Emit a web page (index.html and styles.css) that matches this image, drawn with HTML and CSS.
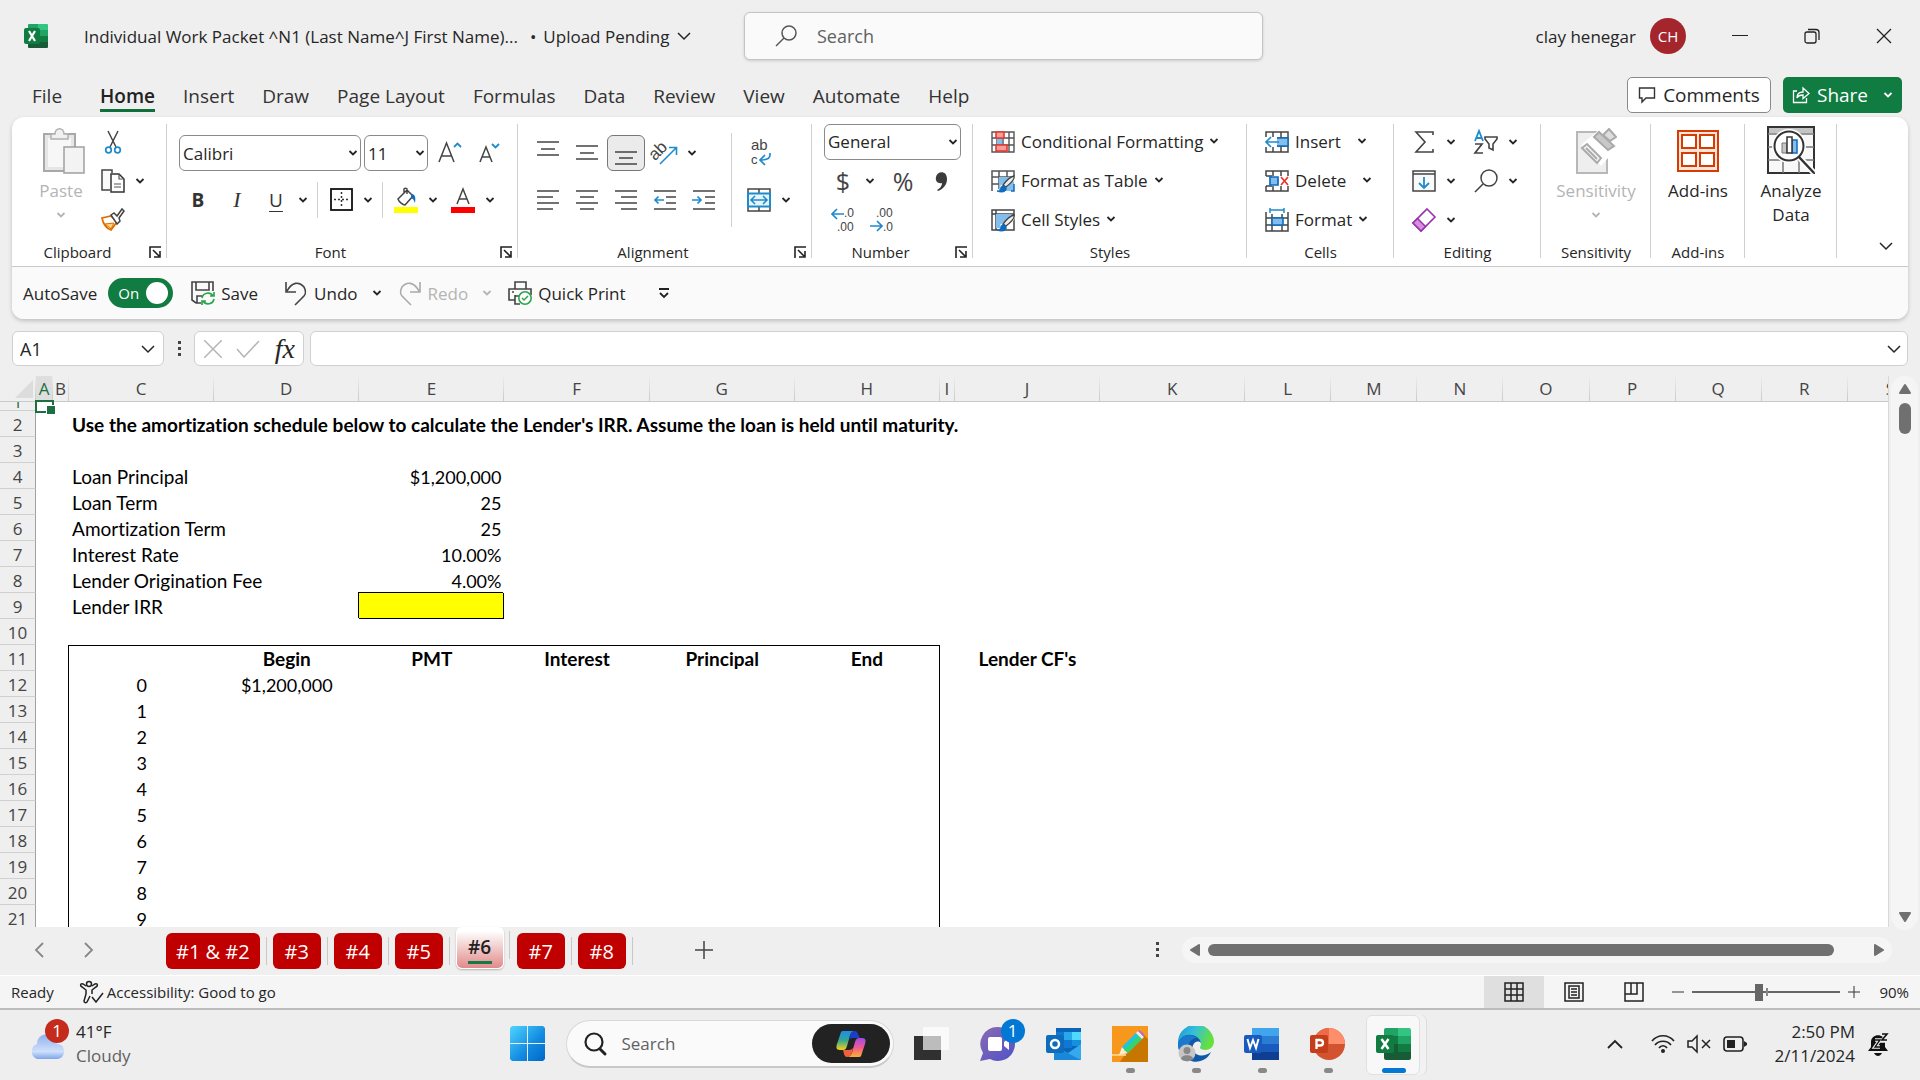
FILE: index.html
```html
<!DOCTYPE html>
<html lang="en">
<head>
  <meta charset="UTF-8">
  <title>Individual Work Packet - Excel</title>
  <link rel="stylesheet" href="styles.css">
</head>
<body>
  <svg class="defs" aria-hidden="true">
    <symbol id="chev" viewBox="0 0 10 10"><path d="M1.500 3l3.500 3.500L8.500 3" fill="none" stroke="currentColor" stroke-width="1.800"/></symbol>
    <symbol id="chev-lg" viewBox="0 0 16 16"><path d="M2 5l6 6 6-6" fill="none" stroke="currentColor" stroke-width="1.500"/></symbol>
    <symbol id="launch" viewBox="0 0 12 12"><path d="M1 12V1h11M4 4l6 6M11 5v6H5" fill="none" stroke="#222" stroke-width="1.600"/></symbol>
    <symbol id="excel" viewBox="0 0 36 36">
      <path d="M8 4a2 2 0 0 1 2-2h12v8H8z" fill="#21a366"/><path d="M22 2h11a2 2 0 0 1 2 2v6H22z" fill="#33c481"/>
      <path d="M8 10h14v8H8z" fill="#107c41"/><path d="M22 10h13v8H22z" fill="#21a366"/>
      <path d="M22 18h13v8H22z" fill="#107c41"/><path d="M8 18h14v8h13v6a2 2 0 0 1-2 2H10a2 2 0 0 1-2-2z" fill="#185c37"/>
      <rect x="0" y="9" width="18" height="18" rx="2" fill="#107c41"/>
      <path d="M5.500 13l7 10M12.500 13l-7 10" stroke="#fff" stroke-width="2.500"/>
    </symbol>
    <symbol id="excel-sm" viewBox="0 0 24 24">
      <path d="M4 1a1 1 0 0 1 1-1h9v6H4z" fill="#21a366"/><path d="M14 0h9a1 1 0 0 1 1 1v5H14z" fill="#33c481"/>
      <path d="M4 6h10v6H4z" fill="#107c41"/><path d="M14 6h10v6H14z" fill="#21a366"/>
      <path d="M14 12h10v6H14z" fill="#107c41"/><path d="M4 12h10v6h10v5a1 1 0 0 1-1 1H5a1 1 0 0 1-1-1z" fill="#185c37"/>
      <rect x="0" y="4" width="16" height="16" rx="2" fill="#107c41"/>
      <path d="M5 7l6 10M11 7L5 17" stroke="#fff" stroke-width="2.200"/>
    </symbol>
    <symbol id="brush" viewBox="0 0 24 24"><path d="M9 17L22 7l2 2-1 3-11 9z" fill="#fff"/><path d="M12 16c3-4 7-8 11-9 1 3-4 8-8 11z" fill="#eee" stroke="#444" stroke-width="1.300"/><path d="M6 22c4 0 3-2 5-5 3-1 5 2 4 4-2 3-7 2-9 1z" fill="#0f6cbd" stroke="#0f6cbd"/></symbol>
  </svg>

  <header class="titlebar">
    <div class="title-left">
      <svg class="i24"><use href="#excel-sm"/></svg>
      <span class="doc-name">Individual Work Packet ^N1 (Last Name^J First Name)...</span>
      <button class="upload"><span>•</span> Upload Pending <svg class="i16"><use href="#chev-lg"/></svg></button>
    </div>
    <label class="search">
      <svg class="i24" viewBox="0 0 24 24"><circle cx="14" cy="9" r="7" fill="none" stroke="#555" stroke-width="1.500"/><path d="M9 14l-8 8" stroke="#555" stroke-width="1.500"/></svg>
      <input type="text" placeholder="Search" aria-label="Search">
    </label>
    <div class="title-right">
      <span>clay henegar</span>
      <span class="avatar">CH</span>
      <button class="win" aria-label="Minimize"><svg class="i16" viewBox="0 0 16 16"><path d="M0 7.500h16" stroke="#222"/></svg></button>
      <button class="win" aria-label="Restore"><svg class="i16" viewBox="0 0 16 16"><rect x="1" y="4" width="11" height="11" rx="2" fill="none" stroke="#222" stroke-width="1.300"/><path d="M4 1.500h8a3 3 0 0 1 3 3V12" fill="none" stroke="#222" stroke-width="1.300"/></svg></button>
      <button class="win" aria-label="Close"><svg class="i16" viewBox="0 0 16 16"><path d="M1 1l14 14M15 1L1 15" stroke="#222" stroke-width="1.300"/></svg></button>
    </div>
  </header>

  <nav class="tabs">
    <a href="#" class="file">File</a>
    <a href="#" class="active">Home</a>
    <a href="#">Insert</a>
    <a href="#">Draw</a>
    <a href="#">Page Layout</a>
    <a href="#">Formulas</a>
    <a href="#">Data</a>
    <a href="#">Review</a>
    <a href="#">View</a>
    <a href="#">Automate</a>
    <a href="#">Help</a>
    <div class="tab-actions">
      <button class="comments"><svg class="i18" viewBox="0 0 18 18"><path d="M1.500 2h15v10H8l-4 4v-4H1.500z" fill="none" stroke="#333" stroke-width="1.400"/></svg>Comments</button>
      <button class="share"><svg class="i18" viewBox="0 0 18 18"><path d="M5 5H1.500v11.500h13V12M5 12c0-5 3-6 6-6V2l6 5.500-6 5V9c-3 0-5 1-6 3z" fill="none" stroke="#fff" stroke-width="1.300"/></svg>Share<svg class="i10"><use href="#chev"/></svg></button>
    </div>
  </nav>

  <section class="ribbon">
    <div class="groups">
      <div class="group clipboard">
        <div class="body">
          <button class="big dim">
            <svg width="42" height="46" viewBox="0 0 42 46"><path d="M1 6h31v37H1z" fill="#e6e6e6" stroke="#a8a8a8" stroke-width="2"/><path d="M5 10h23v29H5z" fill="#f7f7f7"/><path d="M8 11V6h4c0-7 9-7 9 0h4v5z" fill="#f0f0f0" stroke="#b0b0b0" stroke-width="1.500"/><path d="M21 19h20v26H21z" fill="#f3f3f3" stroke="#a0a0a0" stroke-width="1.500"/></svg>
            Paste
            <svg class="i10"><use href="#chev"/></svg>
          </button>
          <div class="stack">
            <div class="row"><button class="ib" aria-label="Cut"><svg class="i24" viewBox="0 0 24 24"><path d="M7 1l8 16M17 1L9 17" stroke="#444" stroke-width="1.500"/><circle cx="7.500" cy="20" r="2.800" fill="none" stroke="#1e8bcd" stroke-width="1.700"/><circle cx="16.500" cy="20" r="2.800" fill="none" stroke="#1e8bcd" stroke-width="1.700"/></svg></button></div>
            <div class="row"><button class="ib" aria-label="Copy"><svg class="i24" viewBox="0 0 24 24"><path d="M9 21H1V1h10v3" fill="#fafafa" stroke="#444" stroke-width="1.500"/><path d="M10 5h8l5 5v13H10z" fill="#fff" stroke="#333" stroke-width="1.500"/><path d="M18 5v5h5M13 15h7M13 18h7" fill="none" stroke="#555" stroke-width="1.200"/></svg></button><button class="dd" aria-label="Copy options"><svg class="i10"><use href="#chev"/></svg></button></div>
            <div class="row"><button class="ib" aria-label="Format Painter"><svg class="i24" viewBox="0 0 24 24"><path d="M1 10l9-2 6 6-6 8C6 21 2 16 1 10z" fill="#fff" stroke="#e06c00" stroke-width="1.700"/><path d="M4 16l9-1-3 6z" fill="#ffd27a" stroke="#e06c00"/><path d="M10 7l3-2 3 3 5-7 2 2-5 7 1 3-3 3z" fill="#fff" stroke="#444" stroke-width="1.500"/></svg></button></div>
          </div>
        </div>
        <div class="foot"><span>Clipboard</span><svg class="i12"><use href="#launch"/></svg></div>
      </div>

      <div class="group font">
        <div class="body two">
          <div class="row">
            <div class="pick pick-font"><select aria-label="Font"><option>Calibri</option></select><svg class="i10"><use href="#chev"/></svg></div>
            <div class="pick pick-size"><select aria-label="Font size"><option>11</option></select><svg class="i10"><use href="#chev"/></svg></div>
            <button class="ib" aria-label="Grow font"><svg class="i24" viewBox="0 0 24 24"><path d="M1 21L8.500 2 16 21M4 15h9" fill="none" stroke="#444" stroke-width="1.500"/><path d="M16 6l3.500-3.500L23 6" fill="none" stroke="#1e8bcd" stroke-width="1.800"/></svg></button>
            <button class="ib" aria-label="Shrink font"><svg class="i24" viewBox="0 0 24 24"><path d="M3 21L9 6l6 15M5 16h8" fill="none" stroke="#444" stroke-width="1.500"/><path d="M15 3l3.500 3.500L22 3" fill="none" stroke="#1e8bcd" stroke-width="1.800"/></svg></button>
          </div>
          <div class="row">
            <button class="ib glyph bold">B</button>
            <button class="ib glyph italic">I</button>
            <button class="ib glyph under">U</button>
            <button class="dd" aria-label="Underline options"><svg class="i10"><use href="#chev"/></svg></button>
            <span class="sep"></span>
            <button class="ib" aria-label="Borders"><svg class="i24" viewBox="0 0 24 24"><rect x="2" y="1" width="21" height="21" fill="#fff" stroke="#111" stroke-width="1.800"/><path d="M12.500 4v16M5 11.500h16" stroke="#333" stroke-width="1.500" stroke-dasharray="2 2"/></svg></button>
            <button class="dd" aria-label="Border options"><svg class="i10"><use href="#chev"/></svg></button>
            <span class="sep"></span>
            <button class="ib" aria-label="Fill colour"><svg class="i24" viewBox="0 0 24 24"><path d="M4 11l9-9 6 6-8 9c-2 0-6-3-7-6zM10 5V1c0-1 3-1 3 0v5" fill="none" stroke="#444" stroke-width="1.500"/><path d="M17 6c4 0 5 3 4 9-1-2-1-4-4-5z" fill="#0f6cbd"/><path d="M0 19h24v6H0z" fill="#ff0"/></svg></button>
            <button class="dd" aria-label="Fill options"><svg class="i10"><use href="#chev"/></svg></button>
            <button class="ib" aria-label="Font colour"><svg class="i24" viewBox="0 0 24 24"><path d="M6 16l6-15 6 15M8 11h8" fill="none" stroke="#444" stroke-width="1.500"/><path d="M0 19h24v6H0z" fill="red"/></svg></button>
            <button class="dd" aria-label="Font colour options"><svg class="i10"><use href="#chev"/></svg></button>
          </div>
        </div>
        <div class="foot"><span>Font</span><svg class="i12"><use href="#launch"/></svg></div>
      </div>

      <div class="group align">
        <div class="body cols">
          <div class="two">
            <div class="row">
              <button class="ib" aria-label="Top align"><svg class="i24 ln" viewBox="0 0 24 24"><path d="M1 1h22M5 8h14M1 14h22"/></svg></button>
              <button class="ib" aria-label="Middle align"><svg class="i24 ln" viewBox="0 0 24 24"><path d="M1 5h22M5 12h14M1 18h22"/></svg></button>
              <button class="ib on" aria-label="Bottom align"><svg class="i24 ln" viewBox="0 0 24 24"><path d="M1 11h22M5 17h14M1 23h22"/></svg></button>
              <button class="ib" aria-label="Orientation"><svg class="i24" viewBox="0 0 24 24"><text class="tiny" x="-2" y="17" transform="rotate(-45 4 14)" font-size="17">ab</text><path d="M7 23L23 7M16 6.500h7.500V14" fill="none" stroke="#1e8bcd" stroke-width="1.600"/></svg></button>
              <button class="dd" aria-label="Orientation options"><svg class="i10"><use href="#chev"/></svg></button>
            </div>
            <div class="row">
              <button class="ib" aria-label="Align left"><svg class="i24 ln" viewBox="0 0 24 24"><path d="M1 3h22M1 9h16M1 15h22M1 21h16"/></svg></button>
              <button class="ib" aria-label="Centre"><svg class="i24 ln" viewBox="0 0 24 24"><path d="M1 3h22M5 9h14M1 15h22M5 21h14"/></svg></button>
              <button class="ib" aria-label="Align right"><svg class="i24 ln" viewBox="0 0 24 24"><path d="M1 3h22M7 9h16M1 15h22M7 21h16"/></svg></button>
              <button class="ib" aria-label="Decrease indent"><svg class="i24 ln" viewBox="0 0 24 24"><path d="M1 3h22M13 9h10M13 15h10M1 21h22"/><path class="blue" d="M11 12H2M5.500 8.500L2 12l3.500 3.500"/></svg></button>
              <button class="ib" aria-label="Increase indent"><svg class="i24 ln" viewBox="0 0 24 24"><path d="M1 3h22M13 9h10M13 15h10M1 21h22"/><path class="blue" d="M0 12h9M5.500 8.500L9 12l-3.500 3.500"/></svg></button>
            </div>
          </div>
          <span class="sep tall"></span>
          <div class="two">
            <div class="row"><button class="ib" aria-label="Wrap text"><svg class="i24" viewBox="0 0 24 24"><text class="tiny" x="4" y="9" font-size="15">ab</text><text class="tiny" x="4" y="23" font-size="13">c</text><path d="M23 12v2c0 4-3 5-9 5M18 14l-5 5 5 5" fill="none" stroke="#1e8bcd" stroke-width="1.700"/></svg></button></div>
            <div class="row"><button class="ib" aria-label="Merge and centre"><svg class="i24" viewBox="0 0 24 24"><path d="M1 1h22v22H1zM12 1v22" fill="#fff" stroke="#444" stroke-width="1.500"/><path d="M1 5.500h22v13H1z" fill="#e8f4fc" stroke="#1e8bcd" stroke-width="2"/><path d="M4 12h16M8 8l-4 4 4 4M16 8l4 4-4 4" fill="none" stroke="#1e8bcd" stroke-width="1.600"/></svg></button><button class="dd" aria-label="Merge options"><svg class="i10"><use href="#chev"/></svg></button></div>
          </div>
        </div>
        <div class="foot"><span>Alignment</span><svg class="i12"><use href="#launch"/></svg></div>
      </div>

      <div class="group number">
        <div class="body stack">
          <div class="row"><div class="pick pick-num"><select aria-label="Number format"><option>General</option></select><svg class="i10"><use href="#chev"/></svg></div></div>
          <div class="row">
            <button class="ib money">$</button>
            <button class="dd" aria-label="Currency options"><svg class="i10"><use href="#chev"/></svg></button>
            <button class="ib money pct">%</button>
            <button class="ib" aria-label="Comma style"><svg class="i24" viewBox="0 0 24 24"><path d="M7 21c4-2 5-5 5-7-4 1-7-2-6-6 1-6 11-7 11 2 0 6-4 10-9 12z" fill="#3b3b3b"/></svg></button>
          </div>
          <div class="row">
            <button class="ib" aria-label="Increase decimal"><svg class="i24" viewBox="0 0 24 24"><text class="tiny" x="13" y="9" font-size="12">.0</text><text class="tiny" x="6" y="23" font-size="12">.00</text><path d="M13 6H1M6 1L1 6l5 5" fill="none" stroke="#1e8bcd" stroke-width="1.700"/></svg></button>
            <button class="ib" aria-label="Decrease decimal"><svg class="i24" viewBox="0 0 24 24"><text class="tiny" x="6" y="9" font-size="12">.00</text><text class="tiny" x="13" y="23" font-size="12">.0</text><path d="M0 18h12M7 13l5 5-5 5" fill="none" stroke="#1e8bcd" stroke-width="1.700"/></svg></button>
          </div>
        </div>
        <div class="foot"><span>Number</span><svg class="i12"><use href="#launch"/></svg></div>
      </div>

      <div class="group styles">
        <div class="body stack">
          <button class="cmd"><svg class="i24" viewBox="0 0 24 24"><path d="M1 2h22v20H1zM1 8h22M1 15h22M6 2v20M12 2v20M18 2v20" fill="#fff" stroke="#555" stroke-width="1.400"/><path d="M6 9h5v5H6z" fill="#83beec"/><path d="M5 2h8v6H5zM5 15h11v6H5z" fill="#ff9a9a" stroke="#e03c31" stroke-width="1.600"/></svg>Conditional Formatting<svg class="i10"><use href="#chev"/></svg></button>
          <button class="cmd"><svg class="i24" viewBox="0 0 24 24"><path d="M1 22V2h22v5M1 8h22M1 15h8M8 2v18M16 2v6" fill="none" stroke="#555" stroke-width="1.500"/><path d="M8 8h15v14H8z" fill="#83beec"/><path d="M20 22h3v-7" fill="none" stroke="#0f6cbd" stroke-width="1.500"/><use href="#brush" width="24" height="24"/></svg>Format as Table<svg class="i10"><use href="#chev"/></svg></button>
          <button class="cmd"><svg class="i24" viewBox="0 0 24 24"><path d="M1 2h22v20H1zM1 6h22M5 2v20" fill="#fff" stroke="#444" stroke-width="1.500"/><path d="M5 6h16l-12 14H5z" fill="#83beec"/><use href="#brush" width="24" height="24"/></svg>Cell Styles<svg class="i10"><use href="#chev"/></svg></button>
        </div>
        <div class="foot"><span>Styles</span></div>
      </div>

      <div class="group cells">
        <div class="body stack">
          <button class="cmd wide"><svg class="i24" viewBox="0 0 24 24"><path d="M1 2h22v20H1zM1 8h22M1 16h22M8 2v20M16 2v20" fill="#fff" stroke="#444" stroke-width="1.500"/><path d="M11 8h12v8H11z" fill="#83beec" stroke="#0f6cbd" stroke-width="1.500"/><path d="M0 7h12v10H0z" fill="#fff"/><path d="M14 12H1M6 7l-5 5 5 5" fill="none" stroke="#1e8bcd" stroke-width="1.700"/></svg>Insert<svg class="i10"><use href="#chev"/></svg></button>
          <button class="cmd wide"><svg class="i24" viewBox="0 0 24 24"><path d="M1 7V2h22v5M1 17v5h22v-5M1 7h6M1 17h6M8 2v5M16 2v5M8 17v5M16 17v5" fill="none" stroke="#444" stroke-width="1.500"/><path d="M5 8h8v8H5z" fill="#83beec" stroke="#0f6cbd" stroke-width="1.700"/><path d="M16 8l7 8M23 8l-7 8" stroke="#e8322a" stroke-width="1.700"/></svg>Delete<svg class="i10"><use href="#chev"/></svg></button>
          <button class="cmd"><svg class="i24" viewBox="0 0 24 24"><path d="M1 4v19h22V4M1 10h22M1 17h22M7 6v17M17 6v17" fill="none" stroke="#444" stroke-width="1.500"/><path d="M7 10h11v7H7z" fill="#83beec" stroke="#0f6cbd" stroke-width="1.600"/><path d="M5 2h14M5 0v5M19 0v5" stroke="#1e8bcd" stroke-width="1.500"/></svg>Format<svg class="i10"><use href="#chev"/></svg></button>
        </div>
        <div class="foot"><span>Cells</span></div>
      </div>

      <div class="group editing">
        <div class="body cols">
          <div class="stack">
            <div class="row"><button class="ib" aria-label="AutoSum"><svg class="i24" viewBox="0 0 24 24"><path d="M21 5V2H4l9 10-9 10h17v-3" fill="none" stroke="#444" stroke-width="1.600"/></svg></button><button class="dd" aria-label="AutoSum options"><svg class="i10"><use href="#chev"/></svg></button></div>
            <div class="row"><button class="ib" aria-label="Fill"><svg class="i24" viewBox="0 0 24 24"><path d="M1 2h22v20H1zM1 5h22" fill="#fafafa" stroke="#444" stroke-width="1.500"/><path d="M12 8v11M7 14l5 5 5-5" fill="none" stroke="#1e8bcd" stroke-width="1.800"/></svg></button><button class="dd" aria-label="Fill options"><svg class="i10"><use href="#chev"/></svg></button></div>
            <div class="row"><button class="ib" aria-label="Clear"><svg class="i24" viewBox="0 0 24 24"><path d="M15 1l8 8-14 14-8-8z" fill="#fff" stroke="#9b2fae" stroke-width="1.600"/><path d="M5.500 10.500l8 8L9 23l-8-8z" fill="#d68fdf" stroke="#9b2fae" stroke-width="1.500"/></svg></button><button class="dd" aria-label="Clear options"><svg class="i10"><use href="#chev"/></svg></button></div>
          </div>
          <div class="stack">
            <div class="row"><button class="ib" aria-label="Sort and filter"><svg class="i24" viewBox="0 0 24 24"><path d="M1 11L5 1l4 10M2.500 8h5" fill="none" stroke="#1e8bcd" stroke-width="1.800"/><path d="M1 14h7l-7 9h8" fill="none" stroke="#444" stroke-width="1.700"/><path d="M11 7h12v2l-4 5v6l-4-2v-4l-4-5z" fill="none" stroke="#444" stroke-width="1.600"/></svg></button><button class="dd" aria-label="Sort options"><svg class="i10"><use href="#chev"/></svg></button></div>
            <div class="row"><button class="ib" aria-label="Find"><svg class="i24" viewBox="0 0 24 24"><circle cx="15" cy="9" r="8" fill="none" stroke="#444" stroke-width="1.500"/><path d="M9 15l-8 8" stroke="#444" stroke-width="1.600"/></svg></button><button class="dd" aria-label="Find options"><svg class="i10"><use href="#chev"/></svg></button></div>
          </div>
        </div>
        <div class="foot"><span>Editing</span></div>
      </div>

      <div class="group sens">
        <div class="body">
          <button class="big dim">
            <svg width="42" height="46" viewBox="0 0 42 46"><path d="M2 4h30v41H2z" fill="#eee" stroke="#b8b8b8" stroke-width="2"/><path d="M6 17L26 0l16 10-9 20-7 8z" fill="#fff"/><path d="M7 20l5-4 14 14-4 5z" fill="#f4f4f4" stroke="#aaa" stroke-width="2"/><path d="M11 20l11 11" stroke="#aaa" stroke-width="2"/><path d="M19 9l5-5 15 14-6 4z" fill="#c8c8c8" stroke="#aaa" stroke-width="2"/><path d="M28 7l6-6 7 8-6 4z" fill="#ddd" stroke="#aaa" stroke-width="2"/></svg>
            Sensitivity
            <svg class="i10"><use href="#chev"/></svg>
          </button>
        </div>
        <div class="foot"><span>Sensitivity</span></div>
      </div>

      <div class="group addins">
        <div class="body">
          <button class="big">
            <svg width="42" height="46" viewBox="0 0 42 46"><path d="M1 3h40v40H1z" fill="#fde5dc" stroke="#d83b01" stroke-width="2"/><path d="M5 7h14v13H5zM23 7h14v13H23zM5 25h14v13H5zM23 25h14v13H23z" fill="#fff" stroke="#d83b01" stroke-width="2"/></svg>
            Add-ins
          </button>
        </div>
        <div class="foot"><span>Add-ins</span></div>
      </div>

      <div class="group analyze">
        <div class="body">
          <button class="big">
            <svg width="48" height="46" viewBox="0 2 48 46" overflow="visible"><path d="M1 1h46v46H1z" fill="#f8f8f8" stroke="#333" stroke-width="2"/><path d="M2 2h44v5H2z" fill="#c4c4c4"/><path d="M1 8h46M1 21h46M1 34h46M16 34v13M32 34v13" stroke="#777" stroke-width="1.500"/><path d="M32 31l15 16" stroke="#fff" stroke-width="6"/><circle cx="22" cy="20" r="17" fill="#fff"/><circle cx="22" cy="20" r="14.500" fill="#fff" stroke="#333" stroke-width="2"/><path d="M32 31l15 16" stroke="#333" stroke-width="2.500"/><path d="M15 17h5v10h-5z" fill="#c8c6c4" stroke="#777"/><path d="M25 14h5v13h-5z" fill="#83beec" stroke="#0f6cbd" stroke-width="1.500"/><path d="M20 11h5v16h-5z" fill="#fff" stroke="#333" stroke-width="1.500"/></svg>
            Analyze<br>Data
          </button>
        </div>
        <div class="foot"></div>
      </div>

      <button class="collapse" aria-label="Collapse ribbon"><svg class="i16"><use href="#chev-lg"/></svg></button>
    </div>

    <div class="quick">
      <label class="autosave">AutoSave <input type="checkbox" checked><span class="switch">On</span></label>
      <button class="q"><svg class="i24" viewBox="0 0 24 24"><path d="M10 22H5l-4-3V1h21v9M5 1v8h13V1M6 22v-7h5" fill="none" stroke="#444" stroke-width="1.600"/><path d="M11 17a6 6 0 0 1 11-2M23 11v4h-4M23 18a6 6 0 0 1-11 2M11 24v-4h4" fill="none" stroke="#2ea44f" stroke-width="1.700"/></svg>Save</button>
      <button class="q"><svg class="i24" viewBox="0 0 24 24"><path d="M2 1v10h10M3 10c5-9 12-10 17-4 3 5 1 9-2 11l-7 7" fill="none" stroke="#444" stroke-width="1.600"/></svg>Undo</button>
      <button class="dd" aria-label="Undo history"><svg class="i10"><use href="#chev"/></svg></button>
      <button class="q dim"><svg class="i24" viewBox="0 0 24 24"><path d="M22 1v10H12M21 10C16 1 9 0 4 6c-3 5-1 9 2 11l7 7" fill="none" stroke="#aaa" stroke-width="1.600"/></svg>Redo</button>
      <button class="dd dim" aria-label="Redo history"><svg class="i10"><use href="#chev"/></svg></button>
      <button class="q"><svg class="i24" viewBox="0 0 24 24"><path d="M7 8V1h11v7M7 19H1V8h22v6M4 11h2M7 14v9h5M7 15h6" fill="none" stroke="#444" stroke-width="1.600"/><circle cx="17" cy="17" r="6.200" fill="#fff" stroke="#2ea44f" stroke-width="1.600"/><path d="M14 17l2 2 4-4" fill="none" stroke="#2ea44f" stroke-width="1.500"/></svg>Quick Print</button>
      <button class="more" aria-label="Customize"><svg class="i12" viewBox="0 0 12 12"><path d="M1 2h10M2 6l4 4 4-4" fill="none" stroke="#222" stroke-width="1.800"/></svg></button>
    </div>
  </section>

  <section class="formula">
    <div class="namebox"><input type="text" value="A1" aria-label="Name box"><svg class="i16"><use href="#chev-lg"/></svg></div>
    <svg class="grip" width="30" height="16" viewBox="0 0 30 16"><path d="M14 0h3v3h-3zM14 6h3v3h-3zM14 12h3v3h-3z" fill="#444"/></svg>
    <div class="fx">
      <button aria-label="Cancel"><svg class="i18" viewBox="0 0 18 18"><path d="M0 0l18 18M18 0L0 18" stroke="#b5b5b5" stroke-width="1.500"/></svg></button>
      <button aria-label="Enter"><svg width="24" height="18" viewBox="0 0 24 18"><path d="M1 9l7 8L23 1" fill="none" stroke="#b5b5b5" stroke-width="1.500"/></svg></button>
      <button class="fn">fx</button>
    </div>
    <div class="bar"><input type="text" aria-label="Formula bar"><svg class="i16"><use href="#chev-lg"/></svg></div>
  </section>

  <main class="sheet">
    <div class="grid">
      <table>
        <colgroup>
          <col class="c-head"><col class="c-a"><col class="c-b">
          <col class="c-m"><col class="c-m"><col class="c-m"><col class="c-m"><col class="c-m"><col class="c-m">
          <col class="c-i"><col class="c-m"><col class="c-m">
          <col class="c-s"><col class="c-s"><col class="c-s"><col class="c-s"><col class="c-s"><col class="c-s"><col class="c-s"><col class="c-s">
        </colgroup>
        <thead>
          <tr><th class="corner"><svg width="18" height="18" viewBox="0 0 18 18"><path d="M18 0v18H0z" fill="#dcdcdc"/></svg></th><th class="sel">A</th><th>B</th><th>C</th><th>D</th><th>E</th><th>F</th><th>G</th><th>H</th><th>I</th><th>J</th><th>K</th><th>L</th><th>M</th><th>N</th><th>O</th><th>P</th><th>Q</th><th>R</th><th>S</th></tr>
        </thead>
        <tbody>
          <tr class="first"><th><span>1</span></th><td class="cursor"></td><td colspan="18"></td></tr>
          <tr><th>2</th><td></td><td></td><td class="b" colspan="17">Use the amortization schedule below to calculate the Lender's IRR. Assume the loan is held until maturity.</td></tr>
          <tr><th>3</th><td colspan="19"></td></tr>
          <tr><th>4</th><td></td><td></td><td colspan="2">Loan Principal</td><td class="num r">$1,200,000</td><td colspan="14"></td></tr>
          <tr><th>5</th><td></td><td></td><td colspan="2">Loan Term</td><td class="num r">25</td><td colspan="14"></td></tr>
          <tr><th>6</th><td></td><td></td><td colspan="2">Amortization Term</td><td class="num r">25</td><td colspan="14"></td></tr>
          <tr><th>7</th><td></td><td></td><td colspan="2">Interest Rate</td><td class="num r">10.00%</td><td colspan="14"></td></tr>
          <tr><th>8</th><td></td><td></td><td colspan="2">Lender Origination Fee</td><td class="num r">4.00%</td><td colspan="14"></td></tr>
          <tr><th>9</th><td></td><td></td><td colspan="2">Lender IRR</td><td class="answer"></td><td colspan="14"></td></tr>
          <tr><th>10</th><td colspan="19"></td></tr>
          <tr class="top"><th>11</th><td></td><td class="lf"></td><td class="b"></td><td class="b c">Begin</td><td class="b c">PMT</td><td class="b c">Interest</td><td class="b c">Principal</td><td class="b c rt">End</td><td></td><td class="b c plain">Lender CF's</td><td colspan="9"></td></tr>
          <tr><th>12</th><td></td><td class="lf"></td><td class="num c">0</td><td class="num c">$1,200,000</td><td colspan="4" class="rt"></td><td colspan="11"></td></tr>
          <tr><th>13</th><td></td><td class="lf"></td><td class="num c">1</td><td colspan="5" class="rt"></td><td colspan="11"></td></tr>
          <tr><th>14</th><td></td><td class="lf"></td><td class="num c">2</td><td colspan="5" class="rt"></td><td colspan="11"></td></tr>
          <tr><th>15</th><td></td><td class="lf"></td><td class="num c">3</td><td colspan="5" class="rt"></td><td colspan="11"></td></tr>
          <tr><th>16</th><td></td><td class="lf"></td><td class="num c">4</td><td colspan="5" class="rt"></td><td colspan="11"></td></tr>
          <tr><th>17</th><td></td><td class="lf"></td><td class="num c">5</td><td colspan="5" class="rt"></td><td colspan="11"></td></tr>
          <tr><th>18</th><td></td><td class="lf"></td><td class="num c">6</td><td colspan="5" class="rt"></td><td colspan="11"></td></tr>
          <tr><th>19</th><td></td><td class="lf"></td><td class="num c">7</td><td colspan="5" class="rt"></td><td colspan="11"></td></tr>
          <tr><th>20</th><td></td><td class="lf"></td><td class="num c">8</td><td colspan="5" class="rt"></td><td colspan="11"></td></tr>
          <tr><th>21</th><td></td><td class="lf"></td><td class="num c">9</td><td colspan="5" class="rt"></td><td colspan="11"></td></tr>
        </tbody>
      </table>
    </div>
    <div class="vscroll">
      <svg class="i12" viewBox="0 0 12 12"><path d="M6 2l5 8H1z" fill="#707070" stroke="#707070" stroke-width="2" stroke-linejoin="round"/></svg>
      <span class="vthumb"></span>
      <svg class="i12 end" viewBox="0 0 12 12"><path d="M6 10l5-8H1z" fill="#707070" stroke="#707070" stroke-width="2" stroke-linejoin="round"/></svg>
    </div>
  </main>

  <section class="sheetbar">
    <div class="sheet-nav">
      <button aria-label="Previous sheet"><svg class="i16" viewBox="0 0 16 16"><path d="M11 1L4 8l7 7" fill="none" stroke="#888" stroke-width="1.800"/></svg></button>
      <button aria-label="Next sheet"><svg class="i16" viewBox="0 0 16 16"><path d="M5 1l7 7-7 7" fill="none" stroke="#888" stroke-width="1.800"/></svg></button>
    </div>
    <div class="sheets">
      <button>#1 &amp; #2</button>
      <button>#3</button>
      <button>#4</button>
      <button>#5</button>
      <button class="current">#6</button>
      <button>#7</button>
      <button>#8</button>
    </div>
    <button class="add" aria-label="New sheet"><svg class="i18" viewBox="0 0 18 18"><path d="M9 0v18M0 9h18" stroke="#444" stroke-width="1.500"/></svg></button>
    <svg class="grip" width="30" height="16" viewBox="0 0 30 16"><path d="M14 0h3v3h-3zM14 6h3v3h-3zM14 12h3v3h-3z" fill="#444"/></svg>
    <div class="hscroll">
      <svg class="i12" viewBox="0 0 12 12"><path d="M2 6l8-5v10z" fill="#707070" stroke="#707070" stroke-width="2" stroke-linejoin="round"/></svg>
      <span class="hthumb"></span>
      <svg class="i12" viewBox="0 0 12 12"><path d="M10 6L2 1v10z" fill="#707070" stroke="#707070" stroke-width="2" stroke-linejoin="round"/></svg>
    </div>
  </section>

  <footer class="status">
    <span>Ready</span>
    <button class="access"><svg class="i24" viewBox="0 0 24 24"><circle cx="9" cy="4" r="2.500" fill="none" stroke="#222" stroke-width="1.500"/><path d="M6 6L3 4C0 3 0 6 2 7l4 3v4l-2 7c0 2 2 2 3 1l3-6M12 6l3-2c3-1 3 2 1 3l-4 3v4M12 17l4 5 7-9" fill="none" stroke="#222" stroke-width="1.500"/></svg>Accessibility: Good to go</button>
    <div class="views">
      <button class="on" aria-label="Normal"><svg class="i20" viewBox="0 0 20 20"><path d="M1 1h18v18H1zM7 1v18M13 1v18M1 7h18M1 13h18" fill="none" stroke="#222" stroke-width="1.500"/></svg></button>
      <button aria-label="Page layout"><svg class="i20" viewBox="0 0 20 20"><path d="M1 1h18v18H1zM5 4h10v12H5zM7 7h6M7 10h6M7 13h6" fill="none" stroke="#222" stroke-width="1.500"/></svg></button>
      <button aria-label="Page break preview"><svg class="i20" viewBox="0 0 20 20"><path d="M1 1h18v18H1zM1 12h12V1M7 1v11" fill="none" stroke="#222" stroke-width="1.500"/></svg></button>
    </div>
    <button class="zoom" aria-label="Zoom out"><svg class="i12" viewBox="0 0 12 12"><path d="M0 6h12" stroke="#333"/></svg></button>
    <div class="slider"><input type="range" min="0" max="100" value="45" aria-label="Zoom"></div>
    <button class="zoom" aria-label="Zoom in"><svg class="i12" viewBox="0 0 12 12"><path d="M0 6h12M6 0v12" stroke="#333"/></svg></button>
    <span class="percent">90%</span>
  </footer>

  <section class="taskbar">
    <div class="weather">
      <div class="cloud">
        <svg width="38" height="38" viewBox="0 0 38 38"><defs><linearGradient id="cl" x1="0" y1="0" x2="0" y2="1"><stop offset="0" stop-color="#8fb0ee"/><stop offset=".7" stop-color="#cfe0fa"/><stop offset="1" stop-color="#7ea5ea"/></linearGradient></defs><path d="M9 34a8 8 0 0 1 0-15C9 7 26 5 29 19c9 0 10 14 0 15z" fill="url(#cl)"/></svg>
        <span class="badge">1</span>
      </div>
      <div class="temp"><span>41°F</span><span class="muted">Cloudy</span></div>
    </div>
    <div class="apps">
      <button class="app" aria-label="Start"><svg class="i36" viewBox="0 0 36 36"><defs><linearGradient id="win" x1="0" y1="0" x2="1" y2="1"><stop offset="0" stop-color="#4fd5ff"/><stop offset=".6" stop-color="#1189e0"/><stop offset="1" stop-color="#0068c8"/></linearGradient></defs><path d="M2 0h15v17H0V2zM18 0h15l2 2v15H18zM0 18h17v17H2l-2-2zM18 18h17v15l-2 2H18z" fill="url(#win)"/></svg></button>
      <label class="tsearch">
        <svg class="i24" viewBox="0 0 24 24"><circle cx="11" cy="10" r="8.500" fill="none" stroke="#222" stroke-width="2.200"/><path d="M17 17l5 5" stroke="#222" stroke-width="3" stroke-linecap="round"/></svg>
        <input type="text" placeholder="Search" aria-label="Taskbar search">
        <span class="pilot"><svg width="30" height="28" viewBox="0 0 30 28"><defs><linearGradient id="co1" x1="0" y1="0" x2="0" y2="1"><stop offset="0" stop-color="#1b8cf0"/><stop offset=".5" stop-color="#36a88d"/><stop offset="1" stop-color="#f8cf1c"/></linearGradient><linearGradient id="co2" x1="0" y1="0" x2="0" y2="1"><stop offset="0" stop-color="#a04be8"/><stop offset=".5" stop-color="#ee5a90"/><stop offset="1" stop-color="#ffb02e"/></linearGradient></defs><path d="M7 1h12c-4 0-5 4-6 8l-2 7c-1 3-2 4-4 4H4c-4 0-4-3-3-6l3-9c1-3 1-4 3-4z" fill="url(#co1)"/><path d="M19 1c3 0 3 4 5 7h-6c-2 0-4 0-5 2 1-5 2-9 6-9z" fill="#1b3fc4"/><path d="M23 27H11c4 0 5-4 6-8l2-7c1-3 2-4 4-4h3c4 0 4 3 3 6l-3 9c-1 3-1 4-3 4z" fill="url(#co2)"/><path d="M11 27c-3 0-3-4-4-7h4c3 0 4 0 6-2-1 5-2 9-6 9z" fill="#f0603c"/></svg></span>
      </label>
      <button class="app" aria-label="Task view"><svg width="36" height="36" viewBox="0 0 36 36"><path d="M0 10h27v24H0z" fill="#303030"/><path d="M9 1h26v23H9z" fill="#fafafa"/><path d="M9 10h18v14H9z" fill="#bcbcbc"/></svg></button>
      <button class="app" aria-label="Chat"><svg class="i36" viewBox="0 0 36 36"><defs><linearGradient id="ch" x1="0" y1="0" x2="1" y2="1"><stop offset="0" stop-color="#8a6bb0"/><stop offset="1" stop-color="#4f52c8"/></linearGradient></defs><path d="M18 1a17 17 0 1 1-8 32L0 35l3-8A17 17 0 0 1 18 1z" fill="url(#ch)"/><rect x="8" y="11" width="14" height="14" rx="2" fill="#fff"/><path d="M24 16l5-4v12l-5-4z" fill="#fff"/></svg><span class="badge blue">1</span></button>
      <button class="app" aria-label="Outlook"><svg class="i36" viewBox="0 0 36 36"><path d="M10 2h25v26H10z" fill="#0a64b8"/><path d="M10 6h8v8h-8zM18 14h8v8h-8z" fill="#0f78d4"/><path d="M18 6h8v8h-8z" fill="#28a8ea"/><path d="M26 6h9v8h-9z" fill="#50d9ff"/><path d="M26 14h9v6h-9z" fill="#1490df"/><path d="M8 20l14 7 13-9v16H8z" fill="#35a9ef"/><path d="M8 20l27 14H8z" fill="#1a88d8"/><rect y="9" width="18" height="18" rx="2" fill="#0f6cbd"/><circle cx="9" cy="18" r="4" fill="none" stroke="#fff" stroke-width="2.500"/></svg></button>
      <button class="app open" aria-label="Pencil"><svg class="i36" viewBox="0 0 36 36"><path d="M0 0h36v36H0z" fill="#f7981d"/><path d="M31 8l5 5v23H8l4-6z" fill="#c77700"/><path d="M0 29h14" stroke="#ffe0a0" stroke-width="1.500"/><path d="M7 29l3-8 6 6z" fill="#ffe9c8"/><path d="M10 21L24 7l6 6-14 14z" fill="#19c6e8"/><path d="M12 24L26 10l4 3-14 14z" fill="#38d26a"/><path d="M24 7l2-2 6 6-2 2z" fill="#eee"/><path d="M26 5c2-2 8 4 6 6z" fill="#b56ad0"/></svg></button>
      <button class="app open" aria-label="Edge"><svg class="i36" viewBox="0 0 36 36"><defs><linearGradient id="ed" x1="0" y1="0" x2="1" y2=".3"><stop offset="0" stop-color="#1d96d8"/><stop offset=".5" stop-color="#35c1d8"/><stop offset="1" stop-color="#66e03c"/></linearGradient></defs><path d="M0 18a18 18 0 1 1 36-3c0 7-6 11-13 8-2-1 0-3 0-5 0-6-15-13-23 0z" fill="url(#ed)"/><path d="M0 18c3-12 20-12 23-1-4-4-10 1-8 7 3 7 12 7 18 2-4 9-15 12-22 8C4 31 0 25 0 18z" fill="#0f58a8"/><path d="M0 18c2-9 13-12 19-6-8 0-12 10-5 22C4 33 0 25 0 18z" fill="#1b78cc"/><circle cx="9" cy="27" r="8.500" fill="#c8c6c4"/><circle cx="9" cy="24.500" r="3.500" fill="#888"/><path d="M3 33c0-5 12-5 12 0-3 3-9 3-12 0z" fill="#888"/></svg></button>
      <button class="app open" aria-label="Word"><svg class="i36" viewBox="0 0 36 36"><path d="M8 2h27v8H8z" fill="#41a5ee"/><path d="M8 10h27v8H8z" fill="#2b7cd3"/><path d="M8 18h27v8H8z" fill="#185abd"/><path d="M8 26h27v8H8z" fill="#103f91"/><rect y="9" width="18" height="18" rx="2" fill="#185abd"/><path d="M3.500 13l2.500 9 3-8 3 8 2.500-9" fill="none" stroke="#fff" stroke-width="2"/></svg></button>
      <button class="app open" aria-label="PowerPoint"><svg class="i36" viewBox="0 0 36 36"><circle cx="19" cy="18" r="16" fill="#d35230"/><path d="M19 2a16 16 0 0 1 16 16H19z" fill="#ff8f6b"/><path d="M19 2v16H3A16 16 0 0 1 19 2z" fill="#ed6c47"/><rect y="9" width="18" height="18" rx="2" fill="#c43e1c"/><path d="M6.500 23V14H10c4 0 4 5.500 0 5.500H6.500" fill="none" stroke="#fff" stroke-width="2.300"/></svg></button>
      <button class="app open active" aria-label="Excel"><svg class="i36"><use href="#excel"/></svg></button>
    </div>
    <div class="tray">
      <svg class="i16" viewBox="0 0 16 16"><path d="M1 12l7-7 7 7" fill="none" stroke="#222" stroke-width="1.800"/></svg>
      <svg class="i24 wifi" viewBox="0 0 24 24"><path d="M1 9c6-7 16-7 22 0M4 13c4-5 12-5 16 0M8 16c2-3 6-3 8 0" fill="none" stroke="#222" stroke-width="1.700"/><circle cx="12" cy="19" r="2" fill="#222"/></svg>
      <svg class="i24" viewBox="0 0 24 24"><path d="M1 9h4l5-5v16l-5-5H1zM15 8l8 8M23 8l-8 8" fill="none" stroke="#222" stroke-width="1.500"/></svg>
      <svg class="i24" viewBox="0 0 24 24"><rect x="1" y="5" width="19" height="14" rx="3" fill="none" stroke="#222" stroke-width="1.600"/><path d="M4 8h8v8H4zM21 9l3 2v2l-3 2z" fill="#222"/></svg>
      <div class="clock"><span>2:50 PM</span><span>2/11/2024</span></div>
      <svg class="i24" viewBox="0 0 24 24"><path d="M4 10c0-9 14-9 14 0v5l3 4H1l3-4zM7 21h8c-2 4-6 4-8 0z" fill="#111"/><path d="M8 8h5l-5 7h5M14 2h6l-5 7h6" fill="none" stroke="#eee" stroke-width="3.500"/><path d="M15 2h5l-5 6h5" fill="none" stroke="#111" stroke-width="1.600"/><path d="M8 8h5l-5 7h5" fill="none" stroke="#111" stroke-width="1.300"/></svg>
    </div>
  </section>
</body>
</html>
```

FILE: styles.css
```css
* {
  box-sizing: border-box;
}

body {
  margin: 0;
  height: 100vh;
  display: flex;
  flex-direction: column;
  overflow: hidden;
  background: #efefef;
  color: #262626;
  font-family: "Open Sans", "Noto Sans", sans-serif;
  font-size: 17px;
}

button, input, select {
  font: inherit;
  color: inherit;
  border: none;
  background: none;
  padding: 0;
  margin: 0;
  outline: none;
}

button {
  display: flex;
  align-items: center;
  justify-content: center;
  flex: none;
}

svg {
  flex: none;
  display: block;
}

.defs { position: absolute; width: 0; height: 0; }
.i10 { width: 10px; height: 10px; }
.i12 { width: 12px; height: 12px; }
.i16 { width: 16px; height: 16px; }
.i18 { width: 18px; height: 18px; }
.i20 { width: 20px; height: 20px; }
.i24 { width: 24px; height: 24px; overflow: visible; }
.i36 { width: 36px; height: 36px; }

.tiny {
  font-family: "Liberation Sans", sans-serif;
  fill: #444;
}

/* title bar */
.titlebar {
  display: grid;
  grid-template-columns: 744fr 519fr 657fr;
  align-items: center;
  height: 72px;
  flex: none;
}

.title-left {
  display: flex;
  align-items: center;
  padding-left: 24px;
  white-space: nowrap;
}

.doc-name { margin-left: 36px; }

.upload {
  margin-left: 12px;
  gap: 7px;
}

.search {
  display: flex;
  align-items: center;
  gap: 18px;
  height: 48px;
  padding: 0 30px;
  background: #fafafa;
  border: 1px solid #c4c4c4;
  border-radius: 6px;
  box-shadow: 0 1px 3px rgba(0, 0, 0, 0.15);
}

.search input {
  flex: 1;
  min-width: 0;
  font-size: 18px;
}

.search input::placeholder, .tsearch input::placeholder {
  color: #616161;
  opacity: 1;
}

.title-right {
  display: flex;
  align-items: center;
  justify-content: flex-end;
}

.avatar {
  width: 36px;
  height: 36px;
  margin: 0 18px 0 14px;
  border-radius: 50%;
  background: #a4262c;
  color: #fff;
  font-size: 15px;
  line-height: 36px;
  text-align: center;
}

.win {
  width: 72px;
  height: 48px;
}

/* tabs */
.tabs {
  display: flex;
  align-items: center;
  gap: 28px;
  height: 45px;
  flex: none;
  padding: 0 18px 0 32px;
  font-size: 19px;
}

.tabs a {
  color: #333;
  text-decoration: none;
  line-height: 26px;
  padding-top: 5px;
  border-bottom: 3px solid transparent;
}

.tabs .file { margin-right: 10px; }

.tabs a.active {
  color: #222;
  font-weight: 600;
  border-color: #0f703b;
}

.tab-actions {
  display: flex;
  gap: 12px;
  margin-left: auto;
}

.tab-actions button {
  height: 36px;
  border-radius: 5px;
  gap: 7px;
}

.comments {
  width: 144px;
  background: #fff;
  border: 1px solid #8a8a8a;
}

.share {
  width: 119px;
  background: #107c41;
  color: #fff;
}

.share .i10 { margin-left: 8px; }

/* ribbon */
.ribbon {
  flex: none;
  margin: 0 12px;
  background: #fff;
  border-radius: 12px;
  box-shadow: 0 2px 4px rgba(0, 0, 0, 0.2);
  overflow: hidden;
}

.groups {
  display: flex;
  height: 150px;
  border-bottom: 1px solid #c8c8c8;
}

.group {
  flex: none;
  position: relative;
  display: flex;
  flex-direction: column;
  padding-top: 5px;
}

.group::after {
  content: "";
  position: absolute;
  right: 0;
  top: 7px;
  bottom: 8px;
  width: 1px;
  background: #d0d0d0;
}

.clipboard { width: 155px; }
.font { width: 351px; }
.align { width: 294px; }
.number { width: 161px; }
.styles { width: 274px; }
.cells { width: 147px; }
.editing { width: 147px; }
.sens { width: 110px; }
.addins { width: 94px; }
.analyze { width: 92px; }

.body {
  display: flex;
  height: 117px;
}

.foot {
  display: flex;
  align-items: center;
  height: 25px;
  font-size: 15px;
}

.foot span {
  flex: 1;
  text-align: center;
}

.foot svg { margin: 0 6px; }

.stack {
  display: flex;
  flex-direction: column;
}

.stack .row, .stack .cmd {
  height: 39px;
}

.row {
  display: flex;
  align-items: center;
  gap: 1px;
}

.two {
  display: flex;
  flex-direction: column;
  gap: 7px;
  padding: 11px 0 0 11px;
}

.two .row { height: 40px; }
.cols { flex-direction: row; }

.ib {
  width: 38px;
  height: 36px;
}

.ib.on {
  background: #ebebeb;
  border: 1px solid #777;
  border-radius: 6px;
}

.dd {
  width: 20px;
  height: 36px;
  margin-left: -3px;
}

.sep {
  width: 1px;
  height: 36px;
  margin: 0 3px;
  background: #d0d0d0;
}

.sep.tall {
  height: 94px;
  margin: 11px 0 0 0;
}

.font .two { padding-left: 12px; }
.align .two:first-child { width: 213px; }
.align .two:last-child { padding-left: 8px; }

.ln path { fill: none; stroke: #444; stroke-width: 1.5px; }
.ln path.blue { stroke: #1e8bcd; stroke-width: 1.7px; }

.glyph { font-size: 19px; color: #333; }
.bold { font-weight: 700; }
.italic { font-family: "Liberation Serif", serif; font-style: italic; font-size: 22px; }
.under { text-decoration: underline; text-underline-offset: 4px; }

.pick {
  position: relative;
  height: 36px;
}

.pick select {
  appearance: none;
  width: 100%;
  height: 36px;
  padding-left: 3px;
  background: #fff;
  border: 1px solid #8a8a8a;
  border-radius: 6px;
}

.pick svg {
  position: absolute;
  right: 3px;
  top: 13px;
}

.pick-font { width: 182px; }
.pick-size { width: 64px; margin: 0 2px; }
.pick-num { width: 137px; }

.big {
  flex: 1;
  flex-direction: column;
  justify-content: flex-start;
  padding-top: 6px;
  line-height: 24px;
}

.big > svg:first-child { margin-bottom: 5px; }
.big .i10 { margin-top: 7px; }
.dim { color: #b4b4b4; }

.clipboard .big {
  flex: none;
  width: 82px;
  margin-left: 8px;
}

.clipboard .big > svg:first-child { margin-left: 6px; }
.clipboard .stack { margin-left: -8px; }
.number .stack { padding-left: 12px; }

.money {
  font-size: 25px;
  color: #444;
}

.pct { margin-left: 3px; }

.styles .stack, .cells .stack {
  align-items: flex-start;
  padding-left: 18px;
}

.cmd { gap: 6px; }
.cmd .i10 { margin-bottom: 2px; }
.cmd.wide .i10 { margin-left: 10px; }

.editing .cols { padding-left: 11px; gap: 6px; }

.collapse {
  margin-left: auto;
  margin-top: 109px;
  width: 44px;
  height: 40px;
}

/* quick access */
.quick {
  display: flex;
  align-items: center;
  height: 52px;
  padding-left: 11px;
  background: #fafafa;
}

.autosave {
  display: flex;
  align-items: center;
  gap: 11px;
  margin-right: 18px;
}

.autosave input {
  position: absolute;
  opacity: 0;
}

.switch {
  position: relative;
  width: 65px;
  height: 30px;
  padding-left: 10px;
  border-radius: 15px;
  background: #107c41;
  color: #fff;
  font-size: 15px;
  line-height: 30px;
}

.switch::after {
  content: "";
  position: absolute;
  right: 5px;
  top: 4px;
  width: 22px;
  height: 22px;
  border-radius: 50%;
  background: #fff;
}

.q {
  gap: 6px;
  margin-right: 12px;
}

.q + .q { margin-left: 14px; }
.dd + .q { margin-left: 11px; }
.more { width: 24px; height: 36px; margin-left: 14px; }

/* formula bar */
.formula {
  display: flex;
  align-items: center;
  flex: none;
  margin: 12px 12px 10px;
  height: 35px;
}

.namebox, .fx, .bar {
  display: flex;
  align-items: center;
  height: 35px;
  background: #fff;
  border: 1px solid #d0d0d0;
  border-radius: 6px;
}

.namebox {
  width: 152px;
  padding: 0 7px;
  font-size: 18px;
}

.namebox input, .bar input {
  flex: 1;
  min-width: 0;
}

.fx {
  width: 110px;
  justify-content: space-between;
  padding: 0 8px 0 9px;
}

.fn {
  font-family: "Liberation Serif", serif;
  font-style: italic;
  font-size: 28px;
}

.bar {
  flex: 1;
  margin-left: 6px;
  padding: 0 5px;
}

/* worksheet */
.sheet {
  flex: 1;
  min-height: 0;
  display: flex;
}

.grid {
  flex: 1;
  min-width: 0;
  overflow: hidden;
  border-right: 1px solid #d8d8d8;
  background: #fff;
}

.grid table {
  width: 1934px;
  table-layout: fixed;
  border-collapse: separate;
  border-spacing: 0;
}

.c-head { width: 36px; }
.c-a { width: 17px; }
.c-b { width: 16px; }
.c-m { width: 145px; }
.c-i { width: 15px; }
.c-s { width: 86px; }

.grid th {
  padding: 0;
  background: #efefef;
  color: #444;
  font-weight: 400;
  font-size: 17px;
  line-height: 20px;
}

thead th {
  height: 26px;
  border-bottom: 1px solid #a0a0a0;
  border-right: 1px solid #d8d8d8;
  border-image: linear-gradient(#efefef, #c8c8c8) 1;
}

.corner svg { margin-left: 15px; }

.grid thead th.sel {
  background: #dedede;
  color: #1d6f42;
}

.grid tbody th {
  padding-top: 2px;
  border-right: 1px solid #a0a0a0;
  border-bottom: 1px solid #d0d0d0;
}

tbody td {
  height: 26px;
  padding: 2px 3px 0;
  color: #000;
  font-family: Lato, sans-serif;
  font-size: 19px;
  font-variant-ligatures: none;
  line-height: 22px;
  white-space: nowrap;
}

tbody .num { font-size: 18px; }

.grid tbody .first td, .grid tbody .first th {
  height: 9px;
  padding: 0;
  line-height: 8px;
}

.first th span {
  display: block;
  height: 8px;
  line-height: 0;
  overflow: hidden;
  color: #1d6f42;
}

.cursor { position: relative; }

.cursor::before {
  content: "";
  position: absolute;
  left: -1px;
  top: -2px;
  right: -1px;
  bottom: -2px;
  border: 2px solid #1d6f42;
}

.cursor::after {
  content: "";
  position: absolute;
  right: -3px;
  bottom: -4px;
  width: 8px;
  height: 8px;
  background: #1d6f42;
  border: 1px solid #fff;
}

.b { font-weight: 700; }
.r { text-align: right; }
.c { text-align: center; }

.answer {
  background: #ff0;
  box-shadow: -1px -1px 0 #000, inset -1px -1px 0 #000;
}

.lf { border-right: 1px solid #000; }
.rt { border-right: 1px solid #000; }
.top .b { border-top: 1px solid #000; padding-top: 1px; }
.top .plain { border-top-color: transparent; }

.vscroll {
  display: flex;
  flex-direction: column;
  align-items: center;
  width: 27px;
  margin: 0 2px -3px 2px;
  padding: 7px 0;
  border-radius: 14px;
  background: #f5f5f5;
}

.vthumb {
  width: 12px;
  height: 31px;
  margin-top: 8px;
  border-radius: 6px;
  background: #707070;
}

.vscroll .end { margin-top: auto; }

/* sheet tabs */
.sheetbar {
  display: flex;
  align-items: center;
  flex: none;
  height: 48px;
  padding: 0 28px 2px 0;
}

.sheet-nav {
  display: flex;
  gap: 32px;
  width: 166px;
  padding-left: 32px;
}

.sheets {
  display: flex;
  gap: 13px;
  padding-top: 2px;
}

.sheets button {
  position: relative;
  height: 36px;
  min-width: 48px;
  padding: 0 10px;
  border-radius: 6px;
  background: #c00000;
  color: #fff;
  font-size: 20px;
}

.sheets button::after {
  content: "";
  position: absolute;
  right: -7px;
  top: 4px;
  width: 1px;
  height: 28px;
  background: #c8c8c8;
}

.sheets .current {
  height: 42px;
  margin-top: -6px;
  padding-bottom: 2px;
  border: 1px solid #fff;
  border-top: none;
  background: linear-gradient(#fff 10%, #e28a8a);
  color: #222;
  font-weight: 600;
  font-size: 19px;
  box-shadow: 0 1px 2px rgba(0, 0, 0, 0.25);
}

.sheets .current::before {
  content: "";
  position: absolute;
  left: 11px;
  right: 11px;
  bottom: 4px;
  height: 3px;
  background: #107c41;
}

.add { margin-left: 69px; }
.sheetbar .grip { margin-left: auto; }

.hscroll {
  display: flex;
  align-items: center;
  width: 710px;
  height: 26px;
  margin-left: 10px;
  padding: 0 7px;
  border-radius: 13px;
  background: #f5f5f5;
}

.hthumb {
  flex: 1;
  height: 12px;
  margin: 0 39px 0 7px;
  border-radius: 6px;
  background: #707070;
}

/* status bar */
.status {
  display: flex;
  align-items: center;
  flex: none;
  height: 35px;
  padding: 0 11px;
  background: #f5f5f5;
  border-top: 1px solid #fff;
  border-bottom: 2px solid #bcbcbc;
  font-size: 15px;
}

.access {
  margin-left: 26px;
  gap: 3px;
}

.views {
  display: flex;
  margin-left: auto;
}

.views button {
  width: 60px;
  height: 32px;
}

.views .on { background: #dfdfdf; }

.zoom {
  width: 28px;
  height: 30px;
}

.slider {
  position: relative;
  display: flex;
  align-items: center;
  width: 148px;
}

/* tick at 100% */
.slider::after {
  content: "";
  position: absolute;
  left: 50%;
  width: 2px;
  height: 8px;
  background: #888;
}

.slider input {
  appearance: none;
  width: 100%;
  height: 2px;
  background: #666;
}

.slider input::-webkit-slider-thumb {
  appearance: none;
  width: 8px;
  height: 17px;
  background: #666;
}

.percent {
  width: 41px;
  text-align: right;
}

/* taskbar */
.taskbar {
  display: grid;
  grid-template-columns: 1fr auto 1fr;
  align-items: center;
  flex: none;
  height: 70px;
  padding-bottom: 2px;
  background: #eee;
  line-height: 24px;
}

.weather {
  display: flex;
  align-items: center;
  gap: 10px;
  padding-left: 28px;
}

.cloud { position: relative; }

.badge {
  position: absolute;
  right: -3px;
  top: -6px;
  width: 24px;
  height: 24px;
  border-radius: 50%;
  background: #c42b1c;
  color: #fff;
  text-align: center;
}

.badge.blue {
  right: 6px;
  top: 4px;
  background: #0078d4;
}

.temp, .clock {
  display: flex;
  flex-direction: column;
}

.muted { color: #616161; }

.apps {
  display: flex;
  align-items: center;
  padding-left: 1px;
}

.app {
  position: relative;
  width: 66px;
  height: 58px;
}

.app.open::after {
  content: "";
  position: absolute;
  left: 29px;
  bottom: 0;
  width: 9px;
  height: 5px;
  border-radius: 3px;
  background: #888;
}

.app.active::before {
  content: "";
  position: absolute;
  left: 5px;
  top: 0;
  width: 52px;
  height: 58px;
  border-radius: 6px;
  background: #f8f8f8;
  border: 1px solid #e0e0e0;
  box-shadow: 6px 0 0 #f2f2f2, 7px 0 0 #ddd;
}

.app.active svg { position: relative; }

.app.active::after {
  left: 21px;
  width: 24px;
  background: #0078d4;
}

.tsearch {
  display: flex;
  align-items: center;
  gap: 15px;
  width: 328px;
  height: 48px;
  margin: 0 5px;
  padding: 0 3px 0 16px;
  border-radius: 24px;
  background: #fafafa;
  border: 1px solid #d8d8d8;
  border-bottom: 2px solid #c8c8c8;
}

.tsearch input {
  flex: 1;
  min-width: 0;
}

.pilot {
  display: flex;
  align-items: center;
  justify-content: center;
  width: 78px;
  height: 39px;
  border-radius: 20px;
  background: #222;
}

.tray {
  display: flex;
  align-items: center;
  justify-content: flex-end;
  gap: 12px;
  padding-right: 29px;
}

.tray .wifi { margin-left: 16px; }

.clock {
  width: 96px;
  text-align: right;
}
```
